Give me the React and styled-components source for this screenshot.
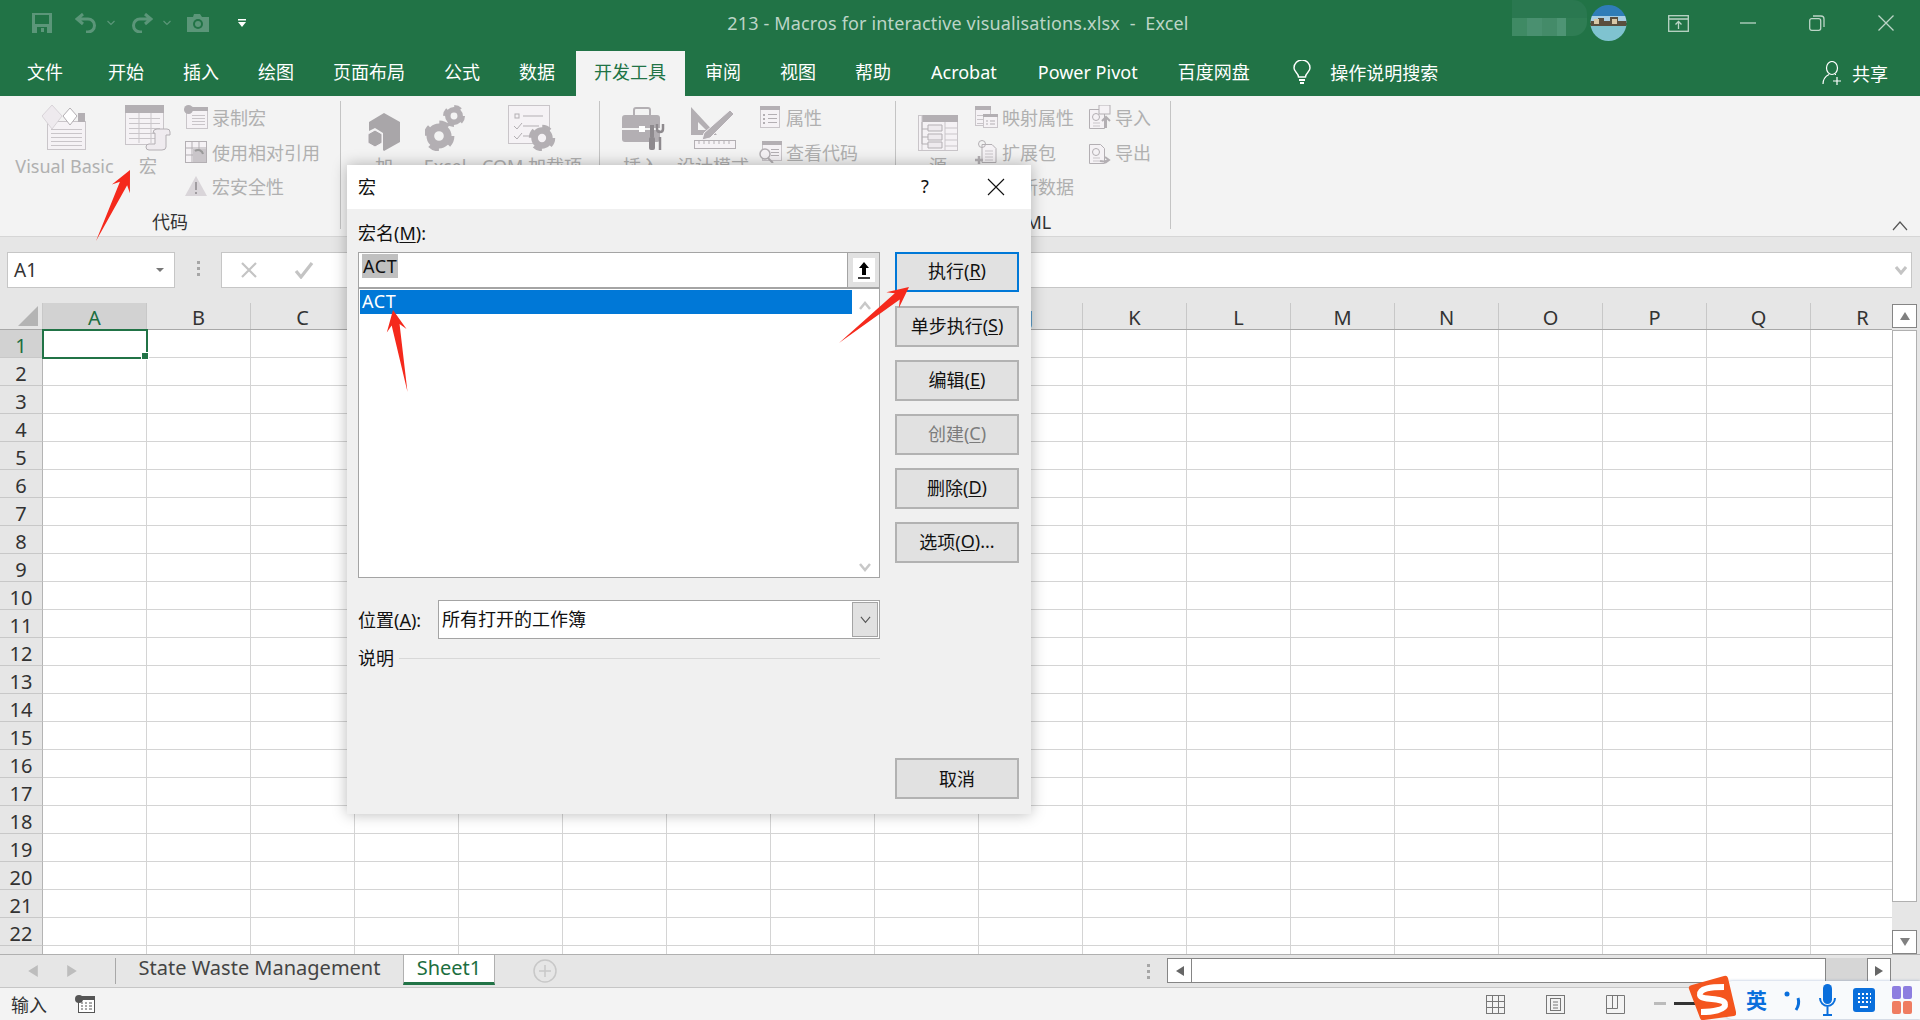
import React from "react"
import styled, { createGlobalStyle } from "styled-components"

const font = `"Noto Sans", "Noto Sans CJK SC", sans-serif`
const GREEN = "#217346"
const D = "#b3afb3"
const L = "#f5f2f5"
const S = "#c9c5c9"

const GlobalStyle = createGlobalStyle`
    html, body { margin: 0; padding: 0; background: #fff; }
    * { box-sizing: border-box; }
    body { font-family: ${font}; font-size: 18px; color: #222; }
`

const Page = styled.div`
    position: relative;
    width: 1920px;
    height: 1020px;
    overflow: hidden;
    display: flex;
    flex-direction: column;
`

const TitleBar = styled.div`
    height: 51px;
    flex: none;
    background: ${GREEN};
    display: grid;
    grid-template-columns: 1fr auto 1fr;
    align-items: start;
`

const Quick = styled.div`
    display: flex;
    align-items: center;
    height: 46px;
    padding-left: 32px;
`

const QuickSlot = styled.div`
    display: flex;
    margin-left: ${(p) => p.$left || 0}px;
`

const TitleText = styled.div`
    color: #bcd5c7;
    font-size: 18px;
    line-height: 46px;
    letter-spacing: 0.15px;
    white-space: pre;
    margin-right: 4px;
`

const WindowControls = styled.div`
    display: flex;
    justify-content: flex-end;
    align-items: flex-start;
`

const BlurName = styled.div`
    width: 75px;
    height: 36px;
    margin-right: 3px;
    background:
        linear-gradient(90deg, #3f8a64 0 20%, #4a9070 20% 40%, #448b69 40% 60%, #4e9474 60% 72%, #2f7d54 72%) 0 18px / 100% 18px no-repeat,
        #2a7850;
    border-radius: 0 14px 14px 0;
`

const Avatar = styled.svg`
    width: 37px;
    height: 36px;
    margin-top: 5px;
    margin-right: 17px;
`

const WindowButton = styled.div`
    width: 69px;
    height: 46px;
    display: flex;
    align-items: center;
    justify-content: center;
`

const TabRow = styled.div`
    height: 45px;
    flex: none;
    background: ${GREEN};
    display: flex;
    align-items: stretch;
    padding-left: 7.5px;
`

const Tab = styled.div`
    padding: 0 ${(p) => (p.$active ? 18.5 : p.$latin ? 20.5 : 19.5)}px;
    margin: ${(p) => (p.$active ? "0 1px" : "0")};
    margin-right: ${(p) => (p.$first ? "6px" : undefined)};
    background: ${(p) => (p.$active ? "#f3f3f3" : "transparent")};
    color: ${(p) => (p.$active ? GREEN : "#fff")};
    font-size: 18px;
    line-height: 42px;
    white-space: nowrap;
`

const SearchBox = styled.div`
    display: flex;
    align-items: center;
    gap: 19px;
    margin-left: 24px;
    color: #fff;
    height: 42px;
`

const Share = styled.div`
    margin-left: auto;
    margin-right: 32px;
    display: flex;
    align-items: center;
    gap: 10px;
    color: #fff;
    height: 44px;
`

const Ribbon = styled.div`
    height: 140px;
    background: #f3f3f3;
    display: flex;
    align-items: flex-start;
    position: relative;
    flex: none;
`

const Group = styled.div`
    width: ${(p) => p.$width}px;
    height: 128px;
    margin-top: 5px;
    border-right: 1.5px solid #c4c4c4;
    display: flex;
    flex-direction: column;
    flex: none;
`

const GroupBody = styled.div`
    flex: 1;
    display: flex;
    align-items: flex-start;
    padding-left: ${(p) => p.$pad}px;
`

const GroupLabel = styled.div`
    height: 19px;
    line-height: 24px;
    text-align: center;
    font-size: 18px;
    color: #333;
`

const LargeButton = styled.div`
    width: ${(p) => p.$width}px;
    flex: none;
    color: #b0b0b0;
    text-align: center;
    white-space: nowrap;
    font-size: 18px;
    line-height: 24px;
`

const LargeIcon = styled.div`
    height: 53px;
    display: flex;
    align-items: flex-end;
    justify-content: center;
    padding-bottom: 3px;
    padding-left: ${(p) => p.$shift || 0}px;
`

const SmallColumn = styled.div`
    margin-left: ${(p) => p.$left}px;
    width: ${(p) => p.$width}px;
    margin-top: -1px;
    flex: none;
`

const SmallButton = styled.div`
    height: 34.5px;
    display: flex;
    align-items: center;
    gap: 4px;
    color: #b0b0b0;
    font-size: 18px;
    white-space: nowrap;
`

const IconSlot = styled.div`
    width: 24px;
    height: 24px;
    flex: none;
    display: flex;
    align-items: center;
    justify-content: center;
`

const CollapseButton = styled.svg`
    position: absolute;
    right: 12px;
    bottom: 5px;
    width: 16px;
    height: 10px;
`

const FormulaBar = styled.div`
    height: 67px;
    flex: none;
    background: #e6e6e6;
    border-top: 1.5px solid #d6d6d6;
    display: flex;
    padding: 15px 8px 0 7px;
`

const NameBox = styled.div`
    width: 168px;
    height: 36px;
    background: #fff;
    border: 1.5px solid #c6c6c6;
    display: flex;
    align-items: center;
    justify-content: space-between;
    padding: 0 10px 0 6px;
    color: #333;
    font-size: 19px;
`

const Caret = styled.div`
    width: 0;
    height: 0;
    border-left: 4px solid transparent;
    border-right: 4px solid transparent;
    border-top: 4px solid #777;
`

const Dots = styled.div`
    width: 46px;
    flex: none;
    display: flex;
    flex-direction: column;
    align-items: center;
    justify-content: center;
    gap: 3px;
    height: 36px;
    padding-bottom: 4px;
`

const Dot = styled.span`
    width: 3px;
    height: 3px;
    background: #a6a6a6;
`

const FormulaInput = styled.div`
    flex: 1;
    height: 36px;
    background: #fff;
    border: 1.5px solid #c6c6c6;
    display: flex;
    align-items: center;
    padding-left: 18px;
    gap: 36px;
`

const FormulaChevron = styled.svg`
    margin-left: auto;
    margin-right: 4px;
    width: 12px;
    height: 10px;
`

const SheetArea = styled.div`
    height: 651px;
    flex: none;
    display: flex;
    background: #e6e6e6;
`

const GridWrap = styled.div`
    position: relative;
    width: 1892px;
    flex: none;
    overflow: hidden;
`

const HeaderRow = styled.div`
    display: flex;
    height: 27px;
    border-bottom: 1.5px solid #a8a8a8;
    background: #e6e6e6;
`

const Corner = styled.div`
    width: 43px;
    flex: none;
    position: relative;
    border-right: 1px solid #c8c8c8;
    &::after {
        content: "";
        position: absolute;
        right: 4px;
        bottom: 3px;
        border-style: solid;
        border-width: 0 0 20px 20px;
        border-color: transparent transparent #b4b4b4 transparent;
    }
`

const ColHeader = styled.div`
    width: 104px;
    flex: none;
    text-align: center;
    line-height: 29px;
    font-size: 20px;
    color: ${(p) => (p.$active ? "#1c6e40" : "#333")};
    background: ${(p) => (p.$active ? "#d2d2d2" : "transparent")};
    border-right: 1px solid #c8c8c8;
`

const Row = styled.div`
    display: flex;
    height: 28px;
    flex: none;
`

const RowHeader = styled.div`
    width: 43px;
    flex: none;
    text-align: center;
    line-height: 31px;
    font-size: 20px;
    color: ${(p) => (p.$active ? "#1c6e40" : "#333")};
    background: ${(p) => (p.$active ? "#d2d2d2" : "#e6e6e6")};
    border-right: 1px solid #b4b4b4;
    border-bottom: 1px solid #c8c8c8;
`

const Cell = styled.div`
    width: 104px;
    flex: none;
    background: #fff;
    border-right: 1px solid #d4d4d4;
    border-bottom: 1px solid #d4d4d4;
`

const ActiveCell = styled.div`
    position: absolute;
    left: 42px;
    top: 26px;
    width: 106px;
    height: 30px;
    border: 2px solid ${GREEN};
    &::after {
        content: "";
        position: absolute;
        right: -3px;
        bottom: -3px;
        width: 6px;
        height: 6px;
        background: ${GREEN};
        border: 1px solid #fff;
    }
`

const VScroll = styled.div`
    width: 25px;
    flex: none;
    display: flex;
    flex-direction: column;
    margin-top: 1px;
`

const ScrollButton = styled.div`
    height: ${(p) => p.$h}px;
    width: ${(p) => p.$w || 25}px;
    background: #fff;
    border: 1.5px solid #858585;
    display: flex;
    align-items: center;
    justify-content: center;
    flex: none;
`

const VThumb = styled.div`
    height: 572px;
    background: #fff;
    border: 1.5px solid #b0b0b0;
    margin-top: 2px;
`

const ScrollGap = styled.div`
    flex: 1;
`

const TabsBar = styled.div`
    height: 34px;
    flex: none;
    background: #e6e6e6;
    border-top: 1.5px solid #b0b0b0;
    border-bottom: 1.5px solid #c6c6c6;
    display: flex;
    align-items: flex-start;
`

const SheetNav = styled.div`
    width: 116px;
    height: 26px;
    margin-top: 3px;
    flex: none;
    border-right: 1.5px solid #a8a8a8;
    display: flex;
    align-items: center;
    padding-left: 27px;
    gap: 27px;
`

const SheetTab = styled.div`
    height: ${(p) => (p.$active ? 30 : 28)}px;
    width: ${(p) => (p.$active ? 92 : 287)}px;
    flex: none;
    text-align: center;
    line-height: 26px;
    font-size: 20px;
    white-space: nowrap;
    color: ${(p) => (p.$active ? "#1c6e40" : "#444")};
    background: ${(p) => (p.$active ? "#fff" : "transparent")};
    border-bottom: ${(p) => (p.$active ? `3px solid ${GREEN}` : "none")};
    border-left: ${(p) => (p.$active ? "1px solid #b0b0b0" : "none")};
    border-right: ${(p) => (p.$active ? "1px solid #b0b0b0" : "none")};
`

const AddSheet = styled.svg`
    width: 24px;
    height: 24px;
    margin: 4px 0 0 38px;
`

const HScrollWrap = styled.div`
    margin-left: auto;
    display: flex;
    align-items: flex-start;
    margin-top: 3px;
    margin-right: 29px;
`

const HDots = styled(Dots)`
    width: 19px;
    height: 26px;
    margin-right: 9px;
    padding-bottom: 0;
`

const HThumb = styled.div`
    width: 634px;
    height: 25px;
    background: #fff;
    border: 1.5px solid #858585;
    border-left: none;
`

const HTrack = styled.div`
    width: 41px;
    height: 25px;
    background: #d6d6d6;
`

const StatusBar = styled.div`
    height: 32px;
    flex: none;
    background: #f3f3f3;
    display: flex;
    align-items: center;
    padding-left: 11px;
    color: #333;
    font-size: 18px;
`

const MacroIcon = styled.svg`
    margin-left: 28px;
`

const ViewButtons = styled.div`
    margin-left: auto;
    display: flex;
    align-items: center;
    gap: 41px;
    padding-right: 295px;
`

const ZoomLine = styled.div`
    position: absolute;
    left: 1654px;
    top: 1002px;
    width: 42px;
    height: 3px;
    background: linear-gradient(90deg, #bbb 0 12px, transparent 12px 20px, #333 20px);
`

const Dialog = styled.div`
    position: absolute;
    left: 347px;
    top: 165px;
    width: 684px;
    height: 649px;
    background: #f0f0f0;
    box-shadow: 0 0 14px rgba(0, 0, 0, 0.28);
    display: flex;
    flex-direction: column;
    z-index: 10;
    color: #111;
`

const DialogTitle = styled.div`
    height: 44px;
    flex: none;
    background: #fff;
    display: flex;
    align-items: center;
    padding-left: 11px;
    padding-bottom: 3px;
    font-size: 18px;
`

const HelpMark = styled.div`
    margin-left: auto;
    width: 20px;
    text-align: center;
`

const DialogClose = styled.svg`
    width: 18px;
    height: 18px;
    margin: 3px 26px 0 52px;
`

const DialogBody = styled.div`
    flex: 1;
    display: flex;
    padding: 0 12px 15px 11px;
    gap: 15px;
`

const LeftColumn = styled.div`
    width: 522px;
    flex: none;
    display: flex;
    flex-direction: column;
`

const FieldLabel = styled.div`
    height: 43px;
    flex: none;
    padding-top: 11px;
    line-height: 26px;
`

const Key = styled.span`
    text-decoration: underline;
    text-underline-offset: 2px;
`

const NameInput = styled.div`
    height: 36px;
    flex: none;
    background: #fff;
    border: 1.5px solid #a4a4a4;
    display: flex;
    align-items: flex-start;
    justify-content: space-between;
    padding-left: 3px;
`

const Selected = styled.span`
    background: #c0c0c0;
    line-height: 24px;
    margin-top: 1px;
    padding: 0 1px;
    letter-spacing: 0.6px;
`

const UploadButton = styled.div`
    width: 32px;
    height: 100%;
    background: #e1e1e1;
    border-left: 1.5px solid #a4a4a4;
    display: flex;
    align-items: center;
    justify-content: center;
`

const UploadFace = styled.div`
    width: 22px;
    height: 24px;
    background: #fff;
    display: flex;
    align-items: center;
    justify-content: center;
`

const ListBox = styled.div`
    height: 290px;
    flex: none;
    background: #fff;
    border: 1.5px solid #a4a4a4;
    display: flex;
    padding: 1px;
`

const ListItems = styled.div`
    flex: 1;
`

const ListItem = styled.div`
    height: 24px;
    background: #0078d7;
    color: #fff;
    line-height: 22px;
    padding-left: 2px;
    letter-spacing: 0.6px;
`

const ListScroll = styled.div`
    width: 26px;
    flex: none;
    display: flex;
    flex-direction: column;
    justify-content: space-between;
    align-items: center;
    padding: 11px 0 4px;
`

const PositionRow = styled.div`
    display: flex;
    align-items: center;
    margin-top: 22px;
    height: 39px;
    flex: none;
`

const PositionLabel = styled.div`
    width: 80px;
    flex: none;
    padding-bottom: 2px;
`

const SelectBox = styled.div`
    flex: 1;
    height: 39px;
    background: #fff;
    border: 1.5px solid #a4a4a4;
    display: flex;
    align-items: center;
    justify-content: space-between;
    padding-left: 3px;
`

const SelectText = styled.span`
    padding-bottom: 3px;
`

const SelectArrow = styled.div`
    width: 26px;
    height: 35px;
    margin-right: 1px;
    background: #e1e1e1;
    border: 1.5px solid #a4a4a4;
    display: flex;
    align-items: center;
    justify-content: center;
`

const DescriptionRow = styled.div`
    display: flex;
    align-items: center;
    gap: 5px;
    margin-top: 6px;
    height: 24px;
    flex: none;
`

const Rule = styled.div`
    flex: 1;
    height: 1px;
    margin-top: 2px;
    background: #d8d8d8;
`

const RightColumn = styled.div`
    width: 124px;
    flex: none;
    display: flex;
    flex-direction: column;
    gap: 13px;
    padding-top: 43px;
`

const DialogButton = styled.div`
    height: ${(p) => (p.$primary ? 40 : 41)}px;
    flex: none;
    margin-top: ${(p) => (p.$bottom ? "auto" : "0")};
    margin-bottom: ${(p) => (p.$primary ? "1px" : "0")};
    padding-bottom: ${(p) => (p.$bottom ? 1 : 4)}px;
    background: #e1e1e1;
    border: ${(p) => (p.$primary ? "2.5px solid #0078d7" : "2px solid #b2b2b2")};
    color: ${(p) => (p.$disabled ? "#7c7c7c" : "#111")};
    display: flex;
    align-items: center;
    justify-content: center;
    white-space: nowrap;
`

const ArrowLayer = styled.svg`
    position: absolute;
    left: 0;
    top: 0;
    width: 1920px;
    height: 1020px;
    z-index: 20;
    pointer-events: none;
`

const Ime = styled.div`
    position: absolute;
    left: 1688px;
    top: 975px;
    width: 232px;
    height: 45px;
    z-index: 30;
`

const ImeBar = styled.div`
    position: absolute;
    left: 36px;
    top: 6px;
    right: 0;
    bottom: 1px;
    background: #f8fafc;
    border-radius: 8px 0 0 8px;
    box-shadow: 0 0 3px rgba(60, 100, 160, 0.45);
    display: flex;
    align-items: center;
    padding-left: 22px;
    gap: 17px;
`

const ImeText = styled.span`
    color: #0a6fdc;
    font-weight: 700;
    font-size: 21px;
    line-height: 1;
    width: 21px;
`

const ImeLogo = styled.svg`
    position: absolute;
    left: 0;
    top: 0;
    width: 48px;
    height: 45px;
`

const Sheet = ({ children, x = 0, y = 0, w, h, head = 5 }) => (
    <g transform={`translate(${x} ${y})`}>
        <rect x=".5" y=".5" width={w - 1} height={h - 1} fill={L} stroke={S} />
        <rect width={w} height={head} fill={D} />
        {children}
    </g>
)

const Lines = ({ x, y, w, n, step = 4, color = S }) => (
    <path d={Array.from({ length: n }, (_, i) => `M${x} ${y + i * step + 0.5}h${w}`).join("")} stroke={color} fill="none" />
)

const Gear = ({ x, y, r }) => (
    <g>
        <circle cx={x} cy={y} r={r * 0.62} fill="none" stroke={D} strokeWidth={r * 0.55} />
        <circle cx={x} cy={y} r={r * 0.95} fill="none" stroke={D} strokeWidth={r * 0.3} strokeDasharray={`${r * 0.72} ${r * 0.77}`} />
    </g>
)

const VbIcon = () => (
    <svg width="46" height="46" viewBox="0 0 46 46">
        <rect x="5.500" y="16.500" width="38" height="28" fill={L} stroke={S} />
        <rect x="36" y="8" width="7" height="9" fill={D} />
        <Lines x={9} y={24} w={31} n={5} />
        <path d="M10 0l10 11-10 13L0 11z" fill="#eeeaee" stroke="#d8d4d8" />
        <path d="M28 3l7 8-7 9-7-9z" fill="#fff" stroke={D} />
    </svg>
)

const MacroLarge = () => (
    <svg width="46" height="46" viewBox="0 0 46 46">
        <Sheet w={39} h={40} head={8}>
            <Lines x={4} y={13} w={31} n={5} step={5} />
            <path d="M14 8v30M26 8v30" stroke={S} />
        </Sheet>
        <path d="M28 28q0-4 4-4h10q3 0 3 3v3h-4v12q0 3-4 3H24q-3 0-3-3t3-3h6V28z" fill="#efebef" stroke={D} />
    </svg>
)

const RecordIcon = () => (
    <svg width="24" height="24" viewBox="0 0 24 24">
        <Sheet x={2} y={2} w={22} h={22} head={4}>
            <Lines x={6} y={8} w={13} n={4} step={3} />
        </Sheet>
        <circle cx="4.500" cy="4.500" r="4.500" fill={D} />
    </svg>
)

const RelativeIcon = () => (
    <svg width="22" height="22" viewBox="0 0 22 22">
        <rect x=".5" y=".5" width="21" height="21" fill={L} stroke={D} />
        <path d="M7 0v22M14 0v22M0 7h22M0 14h22" stroke={D} />
        <rect x="8" y="8" width="13" height="13" fill={S} />
        <path d="M10 10a5 5 0 0 1 8 3" stroke="#999" strokeWidth="2" fill="none" />
    </svg>
)

const WarnIcon = () => (
    <svg width="24" height="22" viewBox="0 0 24 22">
        <path d="M12 1l11 20H1z" fill="#d9d5d9" />
        <path d="M12 7v8M12 17v2" stroke="#a09ca0" strokeWidth="2" />
    </svg>
)

const AddinIcon = () => (
    <svg width="34" height="38" viewBox="0 0 34 38">
        <path d="M17 0l16 9v20l-16 9-1-1V20L8 15 2 18V9z" fill="#a9a6a9" />
        <path d="M8 17l7 4v9l-7 4-7-4v-9z" fill="#a9a6a9" stroke={L} />
    </svg>
)

const GearsIcon = () => (
    <svg width="40" height="46" viewBox="0 0 40 46">
        <Gear x={29} y={11} r={10} />
        <Gear x={14} y={31} r={14} />
    </svg>
)

const ComIcon = () => (
    <svg width="48" height="46" viewBox="0 0 48 46">
        <rect x=".5" y=".5" width="41" height="38" fill={L} stroke={S} />
        <rect x="7" y="9" width="4" height="4" fill="none" stroke={D} />
        <path d="M15 11h20M15 21h16M15 31h8M6 21l3 3 5-6M6 31l3 3 5-6" stroke={D} fill="none" />
        <Gear x={34} y={33} r={12} />
    </svg>
)

const ToolboxIcon = () => (
    <svg width="46" height="44" viewBox="0 0 46 44">
        <path d="M12 8V3q0-2 2-2h12q2 0 2 2v5" fill="none" stroke={D} strokeWidth="2" />
        <path d="M0 11q0-3 3-3h32q3 0 3 3v10H0zM0 23h38v9q0 3-3 3H3q-3 0-3-3z" fill={D} />
        <rect x="17" y="19" width="6" height="6" fill="#fff" />
        <path d="M30 18v12" stroke="#8e8a8e" strokeWidth="4" />
        <rect x="27" y="30" width="6" height="13" rx="2" fill="#8e8a8e" />
        <path d="M38 30V43M35 17v5q0 3 3 3t3-3v-5" stroke="#8e8a8e" strokeWidth="2.500" fill="none" />
    </svg>
)

const DesignIcon = () => (
    <svg width="46" height="44" viewBox="0 0 46 44">
        <path d="M1 0l26 28H1zM8 15v8h8z" fill={D} fillRule="evenodd" />
        <path d="M14 26L40 3l4 4-24 24-8 2z" fill={D} stroke={L} />
        <rect x="4.500" y="33.500" width="41" height="8" fill={L} stroke={D} />
        <path d="M9 34v3M14 34v3M19 34v3M24 34v3M29 34v3M34 34v3M39 34v3" stroke={D} />
    </svg>
)

const PropsIcon = () => (
    <svg width="20" height="22" viewBox="0 0 20 22">
        <Sheet w={20} h={22} head={4}>
            <Lines x={8} y={8} w={9} n={3} step={4} color={D} />
            <path d="M3 8h2v2H3zM3 12h2v2H3zM3 16h2v2H3z" fill={D} />
        </Sheet>
    </svg>
)

const CodeIcon = () => (
    <svg width="23" height="22" viewBox="0 0 23 22">
        <Sheet x={3} w={20} h={20} head={4}>
            <Lines x={9} y={8} w={8} n={3} step={3} color={D} />
        </Sheet>
        <circle cx="6" cy="13" r="5" fill={L} stroke={D} strokeWidth="1.500" />
        <path d="M9 17l5 5" stroke={D} strokeWidth="2" />
    </svg>
)

const SourceIcon = () => (
    <svg width="40" height="36" viewBox="0 0 40 36">
        <rect x=".5" y=".5" width="39" height="35" fill={L} stroke={S} />
        <rect x="4" width="36" height="7" fill={D} />
        <path d="M4 0v36M27 7v29M27 13h13M27 19h13M27 25h13M27 31h13" stroke={S} />
        <path d="M4 14h6M4 22h6M4 29h6M4 7v22" stroke={D} fill="none" />
        <path d="M10 10h14v6H10zM10 19h14v6H10zM10 27h14v6H10z" fill="#eeeaee" stroke={D} />
    </svg>
)

const MapIcon = () => (
    <svg width="23" height="22" viewBox="0 0 23 22">
        <Sheet w={16} h={20} head={4}>
            <Lines x={2} y={9} w={12} n={3} step={4} />
        </Sheet>
        <Sheet x={8} y={8} w={15} h={14} head={3}>
            <path d="M3 7h2M7 7h5M3 10h2M7 10h5" stroke={D} />
        </Sheet>
    </svg>
)

const PackIcon = () => (
    <svg width="22" height="24" viewBox="0 0 22 24">
        <path d="M7 4.500h10l4 4v14H7z" fill={L} stroke={D} />
        <path d="M10 11h8M10 14h8M10 17h8M10 20h8" stroke={S} />
        <circle cx="7" cy="4" r="3.500" fill="none" stroke={D} />
        <path d="M0 20h8M4 16v8" stroke={D} strokeWidth="2.500" />
    </svg>
)

const DocArrowIcon = ({ down }) => (
    <svg width="24" height="24" viewBox="0 0 24 24">
        <path d="M2.500 4.500h11l4 4v15h-15z" fill={L} stroke={D} />
        <circle cx="9" cy="12" r="3.500" fill="none" stroke={D} />
        <path d="M6 18h7M6 21h7" stroke={S} />
        {down ? (
            <path d="M13 21c5 1 7 0 8-1M18 17l4 3-4 3" stroke={D} strokeWidth="2" fill="none" />
        ) : (
            <>
                <rect x="12" y="0" width="11" height="9" fill={L} stroke={D} />
                <path d="M19 23v-10M15 16l4-4 4 4" stroke={D} strokeWidth="2" fill="none" />
            </>
        )}
    </svg>
)

const SaveIcon = () => (
    <svg width="20" height="20" viewBox="0 0 20 20">
        <path d="M0 0h20v20H0z" fill="#5b9679" />
        <path d="M3 2h14v9H3zM5 14h10v6H5z" fill={GREEN} />
        <path d="M9 15h3v4H9z" fill="#5b9679" />
    </svg>
)

const UndoIcon = ({ flip }) => (
    <svg width="22" height="20" viewBox="0 0 22 20" style={{ transform: flip ? "scaleX(-1)" : undefined }}>
        <path d="M8 1L2 6l6 5M2 6h11a6.500 6.500 0 0 1 0 13h-2" fill="none" stroke="#5b9679" strokeWidth="3" />
    </svg>
)

const SmallDown = () => (
    <svg width="8" height="6" viewBox="0 0 8 6">
        <path d="M.5 1l3.500 3.500L7.500 1" stroke="#5b9679" fill="none" strokeWidth="1.200" />
    </svg>
)

const CameraIcon = () => (
    <svg width="22" height="18" viewBox="0 0 22 18">
        <path d="M0 3h6l1-3h6l2 3h7v15H0z" fill="#5b9679" />
        <circle cx="11" cy="10" r="5" fill={GREEN} />
        <circle cx="11" cy="10" r="3" fill="#5b9679" />
    </svg>
)

const CustomizeIcon = () => (
    <svg width="8" height="8" viewBox="0 0 8 8">
        <path d="M0 0h8v1.500H0zM0 3h8L4 8z" fill="#fff" />
    </svg>
)

const AvatarImage = () => (
    <Avatar viewBox="0 0 37 36">
        <defs>
            <clipPath id="avatar-clip">
                <circle cx="18.500" cy="18" r="18" />
            </clipPath>
        </defs>
        <g clipPath="url(#avatar-clip)">
            <rect width="37" height="17" fill="#2f7db8" />
            <rect y="11" width="37" height="7" fill="#a9cfe4" />
            <rect y="20" width="37" height="16" fill="#7fc3d0" />
            <path d="M0 16h8v-3h6v3h6v-4h8v4h9v5H0z" fill="#5a4f3f" />
            <path d="M4 14h5v5H4zM22 14h5v5h-5z" fill="#d8c8a8" />
        </g>
    </Avatar>
)

const RibbonDisplay = () => (
    <svg width="21" height="17" viewBox="0 0 21 17" fill="none" stroke="#bcd5c7" strokeWidth="1.300">
        <rect x=".7" y=".7" width="19.600" height="15.600" />
        <path d="M1 4h19M10.500 14V7M7.500 9.500l3-3 3 3" />
    </svg>
)

const MinimizeIcon = () => (
    <svg width="16" height="2" viewBox="0 0 16 2">
        <path d="M0 1h16" stroke="#bcd5c7" strokeWidth="1.300" />
    </svg>
)

const RestoreIcon = () => (
    <svg width="16" height="16" viewBox="0 0 16 16" fill="none" stroke="#bcd5c7" strokeWidth="1.300">
        <rect x=".7" y="3.700" width="11" height="11.600" rx="2" />
        <path d="M4 1h8q3 0 3 3v8" />
    </svg>
)

const CloseIcon = () => (
    <svg width="16" height="16" viewBox="0 0 16 16">
        <path d="M.5.500l15 15M15.500.500l-15 15" stroke="#bcd5c7" strokeWidth="1.300" />
    </svg>
)

const BulbIcon = () => (
    <svg width="18" height="24" viewBox="0 0 18 24" fill="none" stroke="#fff" strokeWidth="1.400">
        <path d="M5.500 17c0-4-4.500-5-4.500-9a8 8 0 0 1 16 0c0 4-4.500 5-4.500 9z" />
        <path d="M6 20h6M7 23h4" strokeWidth="2" />
    </svg>
)

const PersonIcon = () => (
    <svg width="20" height="24" viewBox="0 0 20 24" fill="none" stroke="#fff" strokeWidth="1.200">
        <ellipse cx="10" cy="7" rx="5.500" ry="6.500" />
        <path d="M1 23c0-5 3-8 6-9.500M13 13.500h1M15 16v8M11 20h8" />
    </svg>
)

const Triangle = ({ dir = "up", color = "#808080", size = 10 }) => {
    const points = {
        up: "5,1 10,9 0,9",
        down: "0,1 10,1 5,9",
        left: "9,0 9,10 1,5",
        right: "1,0 1,10 9,5",
    }[dir]
    return (
        <svg width={size} height={size} viewBox="0 0 10 10">
            <polygon points={points} fill={color} />
        </svg>
    )
}

const Chevron = ({ up, width = 12, color = "#c8c8c8", stroke = 2.5 }) => (
    <svg width={width} height={width * 0.8} viewBox="0 0 12 9.600">
        <path d={up ? "M1 8l5-6 5 6" : "M1 2l5 6 5-6"} fill="none" stroke={color} strokeWidth={stroke} />
    </svg>
)

// red annotation arrow, worked out from its tip and tail
const arrowPoints = (tip, tail, skew = 0) => {
    const dx = tail[0] - tip[0]
    const dy = tail[1] - tip[1]
    const len = Math.hypot(dx, dy)
    const ux = dx / len
    const uy = dy / len
    const nx = -uy
    const ny = ux
    const at = (along, side) => [tip[0] + ux * along + nx * side, tip[1] + uy * along + ny * side].join(",")
    return [tip.join(","), at(21, 10 + skew), at(15, 4), tail.join(","), at(15, -4), at(21, -10 - skew)].join(" ")
}

const SmallItem = ({ icon, children }) => (
    <SmallButton>
        <IconSlot>{icon}</IconSlot>
        <span>{children}</span>
    </SmallButton>
)

const columns = "ABCDEFGHIJKLMNOPQR".split("")
const rows = Array.from({ length: 23 }, (_, i) => i + 1)
const tabs = ["开始", "插入", "绘图", "页面布局", "公式", "数据"]
const tabsAfter = ["审阅", "视图", "帮助"]

export default function App() {
    return (
        <>
            <GlobalStyle />
            <Page>
                <TitleBar>
                    <Quick>
                        <SaveIcon />
                        <QuickSlot $left={23}>
                            <UndoIcon />
                        </QuickSlot>
                        <QuickSlot $left={10}>
                            <SmallDown />
                        </QuickSlot>
                        <QuickSlot $left={16}>
                            <UndoIcon flip />
                        </QuickSlot>
                        <QuickSlot $left={10}>
                            <SmallDown />
                        </QuickSlot>
                        <QuickSlot $left={16}>
                            <CameraIcon />
                        </QuickSlot>
                        <QuickSlot $left={29}>
                            <CustomizeIcon />
                        </QuickSlot>
                    </Quick>
                    <TitleText>213 - Macros for interactive visualisations.xlsx  -  Excel</TitleText>
                    <WindowControls>
                        <BlurName />
                        <AvatarImage />
                        <WindowButton>
                            <RibbonDisplay />
                        </WindowButton>
                        <WindowButton>
                            <MinimizeIcon />
                        </WindowButton>
                        <WindowButton>
                            <RestoreIcon />
                        </WindowButton>
                        <WindowButton>
                            <CloseIcon />
                        </WindowButton>
                    </WindowControls>
                </TitleBar>

                <TabRow>
                    <Tab $first>文件</Tab>
                    {tabs.map((t) => (
                        <Tab key={t}>{t}</Tab>
                    ))}
                    <Tab $active>开发工具</Tab>
                    {tabsAfter.map((t) => (
                        <Tab key={t}>{t}</Tab>
                    ))}
                    <Tab $latin>Acrobat</Tab>
                    <Tab $latin>Power Pivot</Tab>
                    <Tab>百度网盘</Tab>
                    <SearchBox>
                        <BulbIcon />
                        <span>操作说明搜索</span>
                    </SearchBox>
                    <Share>
                        <PersonIcon />
                        <span>共享</span>
                    </Share>
                </TabRow>

                <Ribbon>
                    <Group $width={341}>
                        <GroupBody $pad={10}>
                            <LargeButton $width={109}>
                                <LargeIcon>
                                    <VbIcon />
                                </LargeIcon>
                                Visual Basic
                            </LargeButton>
                            <LargeButton $width={58}>
                                <LargeIcon>
                                    <MacroLarge />
                                </LargeIcon>
                                宏
                            </LargeButton>
                            <SmallColumn $left={7} $width={150}>
                                <SmallItem icon={<RecordIcon />}>录制宏</SmallItem>
                                <SmallItem icon={<RelativeIcon />}>使用相对引用</SmallItem>
                                <SmallItem icon={<WarnIcon />}>宏安全性</SmallItem>
                            </SmallColumn>
                        </GroupBody>
                        <GroupLabel>代码</GroupLabel>
                    </Group>
                    <Group $width={259}>
                        <GroupBody $pad={10}>
                            <LargeButton $width={66}>
                                <LargeIcon>
                                    <AddinIcon />
                                </LargeIcon>
                                加
                            </LargeButton>
                            <LargeButton $width={56}>
                                <LargeIcon>
                                    <GearsIcon />
                                </LargeIcon>
                                Excel
                            </LargeButton>
                            <LargeButton $width={118}>
                                <LargeIcon>
                                    <ComIcon />
                                </LargeIcon>
                                COM 加载项
                            </LargeButton>
                        </GroupBody>
                        <GroupLabel>加载项</GroupLabel>
                    </Group>
                    <Group $width={296}>
                        <GroupBody $pad={10}>
                            <LargeButton $width={62}>
                                <LargeIcon $shift={7}>
                                    <ToolboxIcon />
                                </LargeIcon>
                                插入
                            </LargeButton>
                            <LargeButton $width={82}>
                                <LargeIcon>
                                    <DesignIcon />
                                </LargeIcon>
                                设计模式
                            </LargeButton>
                            <SmallColumn $left={4} $width={120}>
                                <SmallItem icon={<PropsIcon />}>属性</SmallItem>
                                <SmallItem icon={<CodeIcon />}>查看代码</SmallItem>
                                <SmallItem icon={<PropsIcon />}>执行对话框</SmallItem>
                            </SmallColumn>
                        </GroupBody>
                        <GroupLabel>控件</GroupLabel>
                    </Group>
                    <Group $width={275}>
                        <GroupBody $pad={10}>
                            <LargeButton $width={64}>
                                <LargeIcon>
                                    <SourceIcon />
                                </LargeIcon>
                                源
                            </LargeButton>
                            <SmallColumn $left={4} $width={113}>
                                <SmallItem icon={<MapIcon />}>映射属性</SmallItem>
                                <SmallItem icon={<PackIcon />}>扩展包</SmallItem>
                                <SmallItem icon={<MapIcon />}>刷新数据</SmallItem>
                            </SmallColumn>
                            <SmallColumn $left={0} $width={70}>
                                <SmallItem icon={<DocArrowIcon />}>导入</SmallItem>
                                <SmallItem icon={<DocArrowIcon down />}>导出</SmallItem>
                            </SmallColumn>
                        </GroupBody>
                        <GroupLabel>XML</GroupLabel>
                    </Group>
                    <CollapseButton viewBox="0 0 16 10">
                        <path d="M1 9l7-8 7 8" fill="none" stroke="#555" strokeWidth="1.200" />
                    </CollapseButton>
                </Ribbon>

                <FormulaBar>
                    <NameBox>
                        A1
                        <Caret />
                    </NameBox>
                    <Dots>
                        <Dot />
                        <Dot />
                        <Dot />
                    </Dots>
                    <FormulaInput>
                        <svg width="18" height="18" viewBox="0 0 18 18">
                            <path d="M2 2l14 14M16 2L2 16" stroke="#c4c4c4" strokeWidth="2.200" />
                        </svg>
                        <svg width="20" height="18" viewBox="0 0 20 18">
                            <path d="M2 10l5 6L18 2" stroke="#c4c4c4" strokeWidth="3.200" fill="none" />
                        </svg>
                        <FormulaChevron viewBox="0 0 12 10">
                            <path d="M1 2l5 6 5-6" stroke="#c4c4c4" strokeWidth="3" fill="none" />
                        </FormulaChevron>
                    </FormulaInput>
                </FormulaBar>

                <SheetArea>
                    <GridWrap>
                        <HeaderRow>
                            <Corner />
                            {columns.map((c) => (
                                <ColHeader key={c} $active={c === "A"}>
                                    {c}
                                </ColHeader>
                            ))}
                        </HeaderRow>
                        {rows.map((r) => (
                            <Row key={r}>
                                <RowHeader $active={r === 1}>{r === 23 ? "" : r}</RowHeader>
                                {columns.map((c) => (
                                    <Cell key={c} />
                                ))}
                            </Row>
                        ))}
                        <ActiveCell />
                    </GridWrap>
                    <VScroll>
                        <ScrollButton $h={24}>
                            <Triangle dir="up" />
                        </ScrollButton>
                        <VThumb />
                        <ScrollGap />
                        <ScrollButton $h={24}>
                            <Triangle dir="down" />
                        </ScrollButton>
                    </VScroll>
                </SheetArea>

                <TabsBar>
                    <SheetNav>
                        <Triangle dir="left" color="#bdbdbd" size={12} />
                        <Triangle dir="right" color="#bdbdbd" size={12} />
                    </SheetNav>
                    <SheetTab>State Waste Management</SheetTab>
                    <SheetTab $active>Sheet1</SheetTab>
                    <AddSheet viewBox="0 0 24 24">
                        <circle cx="12" cy="12" r="11" fill="none" stroke="#c8c8c8" strokeWidth="1.500" />
                        <path d="M12 6v12M6 12h12" stroke="#c8c8c8" strokeWidth="1.500" />
                    </AddSheet>
                    <HScrollWrap>
                        <HDots>
                            <Dot />
                            <Dot />
                            <Dot />
                        </HDots>
                        <ScrollButton $h={25} $w={25}>
                            <Triangle dir="left" color="#666" />
                        </ScrollButton>
                        <HThumb />
                        <HTrack />
                        <ScrollButton $h={25} $w={24}>
                            <Triangle dir="right" color="#666" />
                        </ScrollButton>
                    </HScrollWrap>
                </TabsBar>

                <StatusBar>
                    输入
                    <MacroIcon width="20" height="18" viewBox="0 0 20 18">
                        <rect x="3.500" y="1.500" width="16" height="16" fill="#fff" stroke="#555" />
                        <rect x="3" y="1" width="17" height="4" fill="#555" />
                        <path d="M6 8h2M10 8h2M14 8h3M6 11h2M10 11h2M14 11h3M6 14h2M10 14h2M14 14h3" stroke="#555" />
                        <circle cx="4" cy="4" r="4" fill="#555" />
                    </MacroIcon>
                    <ViewButtons>
                        <svg width="19" height="19" viewBox="0 0 19 19" fill="none" stroke="#777">
                            <rect x=".5" y=".5" width="18" height="18" />
                            <path d="M6.500 0v19M12.500 0v19M0 6.500h19M0 12.500h19" />
                        </svg>
                        <svg width="19" height="19" viewBox="0 0 19 19" fill="none" stroke="#777">
                            <rect x=".5" y=".5" width="18" height="18" />
                            <rect x="4.500" y="3.500" width="10" height="12" />
                            <path d="M7 7h5M7 10h5M7 13h5" />
                        </svg>
                        <svg width="19" height="19" viewBox="0 0 19 19" fill="none" stroke="#777">
                            <path d="M.5.500h18v18H.5zM.5 13.500h11M6.500.500v13M11.500.500v13" />
                        </svg>
                    </ViewButtons>
                </StatusBar>
                <ZoomLine />

                <Dialog>
                    <DialogTitle>
                        宏
                        <HelpMark>?</HelpMark>
                        <DialogClose viewBox="0 0 18 18">
                            <path d="M1 1l16 16M17 1L1 17" stroke="#111" strokeWidth="1.100" />
                        </DialogClose>
                    </DialogTitle>
                    <DialogBody>
                        <LeftColumn>
                            <FieldLabel>
                                宏名(<Key>M</Key>):
                            </FieldLabel>
                            <NameInput>
                                <Selected>ACT</Selected>
                                <UploadButton>
                                    <UploadFace>
                                        <svg width="12" height="17" viewBox="0 0 12 17">
                                            <path d="M6 0l5 6H8v7H4V6H1z" fill="#000" />
                                            <path d="M0 16h12" stroke="#000" strokeWidth="1.500" />
                                        </svg>
                                    </UploadFace>
                                </UploadButton>
                            </NameInput>
                            <ListBox>
                                <ListItems>
                                    <ListItem>ACT</ListItem>
                                </ListItems>
                                <ListScroll>
                                    <Chevron up />
                                    <Chevron />
                                </ListScroll>
                            </ListBox>
                            <PositionRow>
                                <PositionLabel>
                                    位置(<Key>A</Key>):
                                </PositionLabel>
                                <SelectBox>
                                    <SelectText>所有打开的工作簿</SelectText>
                                    <SelectArrow>
                                        <Chevron width={11} color="#555" stroke={1.2} />
                                    </SelectArrow>
                                </SelectBox>
                            </PositionRow>
                            <DescriptionRow>
                                说明
                                <Rule />
                            </DescriptionRow>
                        </LeftColumn>
                        <RightColumn>
                            <DialogButton $primary>
                                执行(<Key>R</Key>)
                            </DialogButton>
                            <DialogButton>
                                单步执行(<Key>S</Key>)
                            </DialogButton>
                            <DialogButton>
                                编辑(<Key>E</Key>)
                            </DialogButton>
                            <DialogButton $disabled>
                                创建(<Key>C</Key>)
                            </DialogButton>
                            <DialogButton>
                                删除(<Key>D</Key>)
                            </DialogButton>
                            <DialogButton>
                                选项(<Key>O</Key>)...
                            </DialogButton>
                            <DialogButton $bottom>取消</DialogButton>
                        </RightColumn>
                    </DialogBody>
                </Dialog>

                <ArrowLayer viewBox="0 0 1920 1020">
                    <polygon points={arrowPoints([130, 170], [96, 241])} fill="#f5291c" />
                    <polygon points={arrowPoints([393, 310], [407.5, 392])} fill="#f5291c" />
                    <polygon points={arrowPoints([909, 287], [839, 343])} fill="#f5291c" />
                </ArrowLayer>

                <Ime>
                    <ImeBar>
                        <ImeText>英</ImeText>
                        <svg width="18" height="26" viewBox="0 0 18 26">
                            <circle cx="3" cy="7" r="2.500" fill="#0a6fdc" />
                            <path d="M14 11q2 6-2 12" stroke="#0a6fdc" strokeWidth="3" fill="none" />
                        </svg>
                        <svg width="17" height="32" viewBox="0 0 17 32">
                            <rect x="4" y="0" width="9" height="20" rx="4.500" fill="#0a6fdc" />
                            <path d="M1 14a7.500 8 0 0 0 15 0M8.500 23v7M4 31h9" stroke="#0a6fdc" strokeWidth="2" fill="none" />
                        </svg>
                        <svg width="22" height="24" viewBox="0 0 22 24">
                            <rect width="22" height="24" rx="3" fill="#0a6fdc" />
                            <path d="M5 6h2M9 6h2M13 6h2M17 6h1M5 10h2M9 10h2M13 10h2M17 10h1M5 14h2M9 14h2M13 14h2M17 14h1M7 19h8" stroke="#fff" strokeWidth="2" />
                        </svg>
                        <svg width="20" height="28" viewBox="0 0 20 28">
                            <rect width="9" height="13" rx="2" fill="#8d7ee0" />
                            <rect x="11" width="9" height="13" rx="2" fill="#8d7ee0" />
                            <rect y="15" width="9" height="13" rx="2" fill="#ef7d62" />
                            <rect x="11" y="15" width="9" height="13" rx="2" fill="#ef7d62" />
                        </svg>
                    </ImeBar>
                    <ImeLogo viewBox="0 0 48 45">
                        <path d="M4 10L36 1q3-1 4 2l8 34q1 3-2 4L16 45q-3 1-4-2L1 14q-1-3 3-4z" fill="#f4551e" />
                        <path d="M36 12C24 12 11 13 12 20c1 6 24 2 25 9 1 6-13 8-24 8" fill="none" stroke="#fff" strokeWidth="6" />
                    </ImeLogo>
                </Ime>
            </Page>
        </>
    )
}
